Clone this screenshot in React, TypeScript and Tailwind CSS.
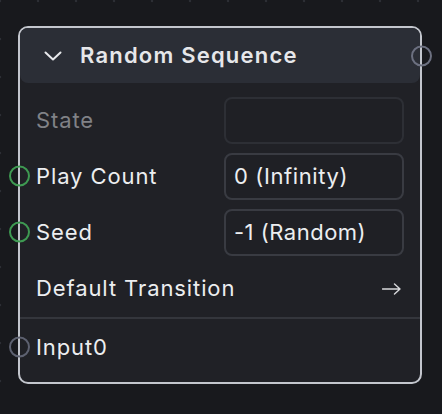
import React from "react";

const font = { fontFamily: "Inter, 'Noto Sans', sans-serif" };

function Socket({ color, side }: { color: string; side: "left" | "right" }) {
  return (
    <span
      className={`absolute top-1/2 -translate-y-1/2 w-[21px] h-[21px] rounded-full border-2 ${color} ${
        side === "left" ? "left-[-11px]" : "right-[-12px]"
      }`}
    />
  );
}

export default function App() {
  return (
    <div
      className="w-[442px] h-[414px] bg-[#18191d] pl-[18px] pt-[26px] bg-[radial-gradient(circle,#2c2e34_1.2px,transparent_1.6px)] bg-[size:38px_38px] bg-[position:-19px_-18px]"
      style={font}
    >
      <div className="w-[404px] h-[358px] rounded-[10px] border-2 border-[#c3c6cd] bg-[#202126] flex flex-col">
        <div className="relative h-[55px] shrink-0 rounded-t-[8px] rounded-b-[8px] bg-[#2b2e36] flex items-center pl-[24px]">
          <svg width="18" height="10" viewBox="0 0 18 10" className="shrink-0">
            <path d="M1.5 1.5 L9 8.5 L16.5 1.5" fill="none" stroke="#e8e9ec" strokeWidth="2" strokeLinecap="round" strokeLinejoin="round" />
          </svg>
          <span className="ml-[18px] text-[22px] font-semibold text-[#e6e7ea] tracking-[1.2px]">Random Sequence</span>
          <Socket color="border-[#6c7080]" side="right" />
        </div>
        <div className="pt-[9px] flex flex-col text-[22px] tracking-[0.9px]">
          <div className="relative h-[56px] flex items-center justify-between pl-[16px] pr-[16px]">
            <span className="text-[#808287]">State</span>
            <div className="w-[180px] h-[47px] rounded-[8px] border-2 border-[#2d2f35] bg-[#1f2025]" />
          </div>
          <div className="relative h-[56px] flex items-center justify-between pl-[16px] pr-[16px]">
            <Socket color="border-[#3e9a52]" side="left" />
            <span className="text-[#eceef0]">Play Count</span>
            <div className="w-[180px] h-[47px] rounded-[8px] border-2 border-[#393b42] bg-[#1f2025] flex items-center pl-[8px] tracking-[0.6px] text-[#eceef0]">
              0 (Infinity)
            </div>
          </div>
          <div className="relative h-[56px] flex items-center justify-between pl-[16px] pr-[16px]">
            <Socket color="border-[#3e9a52]" side="left" />
            <span className="text-[#eceef0]">Seed</span>
            <div className="w-[180px] h-[47px] rounded-[8px] border-2 border-[#393b42] bg-[#1f2025] flex items-center pl-[8px] tracking-[0.5px] text-[#eceef0]">
              -1 (Random)
            </div>
          </div>
          <div className="relative h-[57px] flex items-center justify-between pl-[16px] pr-[19px]">
            <span className="text-[#eceef0]">Default Transition</span>
            <svg width="19" height="12" viewBox="0 0 19 12" className="shrink-0">
              <path d="M0.5 6 H18 M12.5 1 L18 6 L12.5 11" fill="none" stroke="#d8d9dc" strokeWidth="1.4" strokeLinecap="round" strokeLinejoin="round" />
            </svg>
          </div>
          <div className="h-[2px] bg-[#34363c]" />
          <div className="relative h-[56px] flex items-center pl-[16px]">
            <Socket color="border-[#5d6170]" side="left" />
            <span className="text-[#eceef0]">Input0</span>
          </div>
        </div>
      </div>
    </div>
  );
}
